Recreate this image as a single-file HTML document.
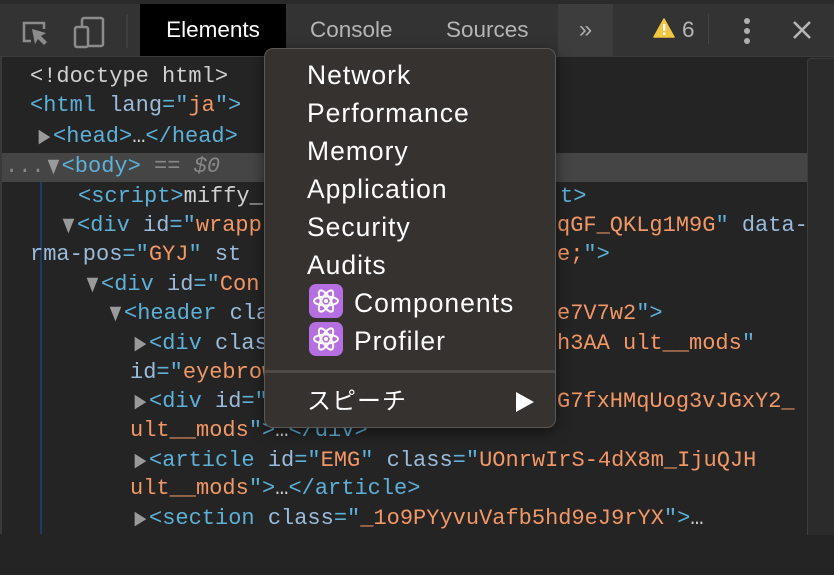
<!DOCTYPE html>
<html><head><meta charset="utf-8"><style>
body{margin:0;width:834px;height:534px;overflow:hidden;background:#242424;position:relative;font-family:"Liberation Sans",sans-serif}
.tb{position:absolute;left:0;top:0;width:834px;height:57px;background:#333;border-top:4px solid #2a2a2a;box-sizing:border-box;border-bottom:1px solid #3c3c3c}
.tab{position:absolute;top:4px;height:52px;line-height:52px;font-size:22.5px;color:#b5b5b5}
.code{position:absolute;left:0;top:0;font-family:"Liberation Mono",monospace;font-size:22px;white-space:pre;color:#d0d0d0}
.l{position:absolute;height:29px;line-height:29px}
.t{color:#5db0d7}.a{color:#9bbbdc}.v{color:#f29766}.g{color:#888}
.ar{color:#9a9a9a;font-size:19px;display:inline-block;width:17px;text-align:center;vertical-align:0px;font-family:"DejaVu Sans",sans-serif;transform:scale(.8,1)}
.menu{position:absolute;left:264px;top:48px;width:292px;height:380px;background:#353230;border:1px solid #5a5754;border-radius:9px;box-sizing:border-box;box-shadow:0 4px 14px rgba(0,0,0,.5)}
.mi{position:absolute;left:42px;font-size:26.5px;color:#fff;letter-spacing:1px;line-height:38px}
</style></head><body>
<div class="tb">
<svg style="position:absolute;left:20px;top:13px" width="32" height="32" viewBox="0 0 32 32"><path d="M11 24H4V6h20v6" fill="none" stroke="#8c8c8c" stroke-width="2.5"/><path d="M12 12l3 15 3-5 6 6 3-3-6-6 5-3z" fill="#8c8c8c"/></svg>
<svg style="position:absolute;left:72px;top:11px" width="34" height="36" viewBox="0 0 34 36"><rect x="10" y="3" width="21" height="28" rx="2" fill="none" stroke="#8c8c8c" stroke-width="2.5"/><rect x="3" y="12" width="13" height="20" rx="2" fill="#333" stroke="#8c8c8c" stroke-width="2.5"/></svg>
<div style="position:absolute;left:126px;top:10px;width:2px;height:34px;background:#3e3e3e"></div>
</div>
<div class="tab" style="left:140px;width:146px;background:#000;color:#fff;text-align:center">Elements</div>
<div class="tab" style="left:310px">Console</div>
<div class="tab" style="left:446px">Sources</div>
<div class="tab" style="left:558px;width:55px;background:#3d3d3d;text-align:center;color:#aaa;font-size:24px">»</div>
<svg style="position:absolute;left:653px;top:18px" width="22" height="20" viewBox="0 0 22 20"><path d="M11 1L21 19H1z" fill="#f3c542" stroke="#f3c542" stroke-linejoin="round" stroke-width="1.5"/><rect x="10" y="6" width="2.4" height="7" fill="#fff"/><rect x="10" y="14.5" width="2.4" height="2.4" fill="#fff"/></svg>
<div class="tab" style="left:682px;color:#b5b5b5">6</div>
<div style="position:absolute;left:708px;top:14px;width:1px;height:30px;background:#444"></div>
<div style="position:absolute;left:744px;top:18px;width:6px;height:6px;border-radius:3px;background:#b0b0b0;box-shadow:0 10px 0 #b0b0b0,0 20px 0 #b0b0b0"></div>
<svg style="position:absolute;left:792px;top:20px" width="20" height="20" viewBox="0 0 20 20"><path d="M2 2L18 18M18 2L2 18" stroke="#b5b5b5" stroke-width="2.6"/></svg>
<div style="position:absolute;left:0;top:57px;width:2px;height:477px;background:#3a3a3a"></div>
<div style="position:absolute;left:807px;top:58px;width:27px;height:476px;background:#2b2b2b;border-left:1px solid #3c3c3c;border-top:1px solid #3c3c3c;border-radius:4px 0 0 0"></div>
<div style="position:absolute;left:2px;top:153px;width:805px;height:29px;background:#454545"></div>
<div style="position:absolute;left:40px;top:182px;width:2px;height:352px;background:#1f3a66"></div>
<div class="code">
<div class="l" style="left:30px;top:62px">&lt;!doctype html&gt;</div>
<div class="l" style="left:30px;top:91px"><span class="t">&lt;html </span><span class="a">lang</span><span class="t">="</span><span class="v">ja</span><span class="t">"&gt;</span></div>
<div class="l" style="left:36px;top:122px"><span class="ar">▶</span><span class="t">&lt;head&gt;</span>…<span class="t">&lt;/head&gt;</span></div>
<div class="l" style="left:5px;top:152px"><span class="g">...</span><span class="ar">▼</span><span class="t">&lt;body&gt;</span><span class="g"> == <i>$0</i></span></div>
<div class="l" style="left:78px;top:182px"><span class="t">&lt;script&gt;</span>miffy_</div>
<div class="l" style="left:560px;top:182px"><span class="t">t&gt;</span></div>
<div class="l" style="left:60px;top:211px"><span class="ar">▼</span><span class="t">&lt;div </span><span class="a">id</span><span class="t">="</span><span class="v">wrapp</span></div>
<div class="l" style="left:557px;top:211px"><span class="v">qGF_QKLg1M9G</span><span class="t">"</span> <span class="a">data-</span></div>
<div class="l" style="left:30px;top:240px"><span class="a">rma-pos</span><span class="t">="</span><span class="v">GYJ</span><span class="t">"</span> <span class="a">st</span></div>
<div class="l" style="left:557px;top:240px"><span class="v">e;</span><span class="t">"&gt;</span></div>
<div class="l" style="left:84px;top:270px"><span class="ar">▼</span><span class="t">&lt;div </span><span class="a">id</span><span class="t">="</span><span class="v">Con</span></div>
<div class="l" style="left:107px;top:299px"><span class="ar">▼</span><span class="t">&lt;header </span><span class="a">cla</span></div>
<div class="l" style="left:557px;top:299px"><span class="v">e7V7w2</span><span class="t">"&gt;</span></div>
<div class="l" style="left:132px;top:329px"><span class="ar">▶</span><span class="t">&lt;div </span><span class="a">clas</span></div>
<div class="l" style="left:557px;top:329px"><span class="v">h3AA ult__mods</span><span class="t">"</span></div>
<div class="l" style="left:130px;top:358px"><span class="a">id</span><span class="t">="</span><span class="v">eyebrow</span></div>
<div class="l" style="left:132px;top:387px"><span class="ar">▶</span><span class="t">&lt;div </span><span class="a">id</span><span class="t">="</span></div>
<div class="l" style="left:557px;top:387px"><span class="v">G7fxHMqUog3vJGxY2_</span></div>
<div class="l" style="left:130px;top:416px"><span class="v">ult__mods</span><span class="t">"&gt;</span>…<span class="t">&lt;/div&gt;</span></div>
<div class="l" style="left:132px;top:446px"><span class="ar">▶</span><span class="t">&lt;article </span><span class="a">id</span><span class="t">="</span><span class="v">EMG</span><span class="t">"</span> <span class="a">class</span><span class="t">="</span><span class="v">UOnrwIrS-4dX8m_IjuQJH</span></div>
<div class="l" style="left:130px;top:474px"><span class="v">ult__mods</span><span class="t">"&gt;</span>…<span class="t">&lt;/article&gt;</span></div>
<div class="l" style="left:132px;top:504px"><span class="ar">▶</span><span class="t">&lt;section </span><span class="a">class</span><span class="t">="</span><span class="v">_1o9PYyvuVafb5hd9eJ9rYX</span><span class="t">"&gt;</span>…</div>
</div>
<div class="menu">
<div class="mi" style="top:7px">Network</div>
<div class="mi" style="top:45px">Performance</div>
<div class="mi" style="top:83px">Memory</div>
<div class="mi" style="top:121px">Application</div>
<div class="mi" style="top:159px">Security</div>
<div class="mi" style="top:197px">Audits</div>
<svg style="position:absolute;left:44px;top:235px" width="34" height="34" viewBox="0 0 34 34"><rect x="0" y="0" width="34" height="34" rx="7" fill="#b56fe0"/><g fill="none" stroke="#fff" stroke-width="2"><ellipse cx="17" cy="17" rx="12" ry="4.5"/><ellipse cx="17" cy="17" rx="12" ry="4.5" transform="rotate(60 17 17)"/><ellipse cx="17" cy="17" rx="12" ry="4.5" transform="rotate(-60 17 17)"/></g><circle cx="17" cy="17" r="2" fill="#fff"/></svg>
<div class="mi" style="top:235px;left:89px">Components</div>
<svg style="position:absolute;left:44px;top:273px" width="34" height="34" viewBox="0 0 34 34"><rect x="0" y="0" width="34" height="34" rx="7" fill="#b56fe0"/><g fill="none" stroke="#fff" stroke-width="2"><ellipse cx="17" cy="17" rx="12" ry="4.5"/><ellipse cx="17" cy="17" rx="12" ry="4.5" transform="rotate(60 17 17)"/><ellipse cx="17" cy="17" rx="12" ry="4.5" transform="rotate(-60 17 17)"/></g><circle cx="17" cy="17" r="2" fill="#fff"/></svg>
<div class="mi" style="top:273px;left:89px">Profiler</div>
<div style="position:absolute;left:0;top:321px;width:290px;height:3px;background:#4d4a48"></div>
<div class="mi" style="top:334px;font-family:'Liberation Sans','Noto Sans CJK JP',sans-serif;font-size:24px">スピーチ</div>
<svg style="position:absolute;left:250px;top:342px" width="20" height="22" viewBox="0 0 20 22"><path d="M1 1L19 11L1 21z" fill="#fff"/></svg>
</div>
</body></html>
